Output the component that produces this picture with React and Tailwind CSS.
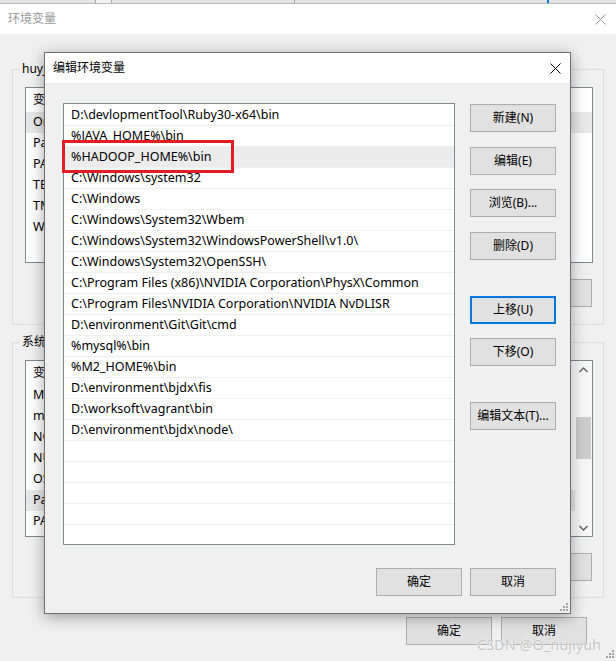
import React from "react";

const FONT = "font-[family-name:'Noto_Sans','Noto_Sans_CJK_SC',sans-serif]";

function CloseX({ color = "#000000" }) {
  return (
    <svg width="11" height="11" viewBox="0 0 11 11">
      <path d="M0.5 0.5 L10.5 10.5 M10.5 0.5 L0.5 10.5" stroke={color} strokeWidth="1" fill="none" />
    </svg>
  );
}

function Grip() {
  return (
    <svg width="8" height="8" viewBox="0 0 8 8">
      <g fill="#a6a6a6">
        <rect x="6" y="0" width="2" height="2" />
        <rect x="3" y="3" width="2" height="2" />
        <rect x="6" y="3" width="2" height="2" />
        <rect x="0" y="6" width="2" height="2" />
        <rect x="3" y="6" width="2" height="2" />
        <rect x="6" y="6" width="2" height="2" />
      </g>
    </svg>
  );
}

function Btn({ children, focused = false }) {
  return (
    <div
      className={
        focused
          ? "flex h-[28px] w-[86px] shrink-0 items-center justify-center border-2 border-[#0078d7] bg-[#e1e1e1] text-[12px] text-black"
          : "flex h-[28px] w-[86px] shrink-0 items-center justify-center border border-[#adadad] bg-[#e1e1e1] text-[12px] text-black"
      }
    >
      {children}
    </div>
  );
}

function BackList({ rows, highlight, height, scroll = false }) {
  return (
    <div className="flex border border-[#828790] bg-white" style={{ height }}>
      <div className="flex min-w-0 flex-1 flex-col overflow-hidden">
        <div className="flex h-[24px] shrink-0 items-center text-[12px]">
          <span className="pl-[7px]">变量</span>
        </div>
        {rows.map((r) => (
          <div
            key={r}
            className={
              r === highlight
                ? "flex h-[21px] shrink-0 items-center bg-[#e8e8e8] text-[12.5px]"
                : "flex h-[21px] shrink-0 items-center text-[12.5px]"
            }
          >
            <span className="whitespace-nowrap pl-[7px]">{r}</span>
          </div>
        ))}
      </div>
      {scroll && (
        <div className="flex w-[17px] shrink-0 flex-col items-center bg-[#f7f7f7]">
          <div className="flex h-[17px] w-full items-center justify-center">
            <svg width="9" height="6" viewBox="0 0 9 6">
              <path d="M0.5 5 L4.5 1 L8.5 5" stroke="#606060" strokeWidth="1.4" fill="none" />
            </svg>
          </div>
          <div className="mt-[39px] h-[42px] w-[15px] bg-[#cdcdcd]" />
          <div className="flex-1" />
          <div className="flex h-[17px] w-full items-center justify-center">
            <svg width="9" height="6" viewBox="0 0 9 6">
              <path d="M0.5 1 L4.5 5 L8.5 1" stroke="#606060" strokeWidth="1.4" fill="none" />
            </svg>
          </div>
        </div>
      )}
    </div>
  );
}

function Group({ label, children, className = "" }) {
  return (
    <div className={"flex flex-col border border-[#dcdcdc] pl-[12px] pr-[10px] " + className}>
      <div className="-ml-[5px] -mt-[9px] h-[16px] w-fit bg-[#f0f0f0] px-[2px] text-[12px] leading-[16px]">
        {label}
      </div>
      {children}
    </div>
  );
}

const paths = [
  "D:\\devlopmentTool\\Ruby30-x64\\bin",
  "%JAVA_HOME%\\bin",
  "%HADOOP_HOME%\\bin",
  "C:\\Windows\\system32",
  "C:\\Windows",
  "C:\\Windows\\System32\\Wbem",
  "C:\\Windows\\System32\\WindowsPowerShell\\v1.0\\",
  "C:\\Windows\\System32\\OpenSSH\\",
  "C:\\Program Files (x86)\\NVIDIA Corporation\\PhysX\\Common",
  "C:\\Program Files\\NVIDIA Corporation\\NVIDIA NvDLISR",
  "D:\\environment\\Git\\Git\\cmd",
  "%mysql%\\bin",
  "%M2_HOME%\\bin",
  "D:\\environment\\bjdx\\fis",
  "D:\\worksoft\\vagrant\\bin",
  "D:\\environment\\bjdx\\node\\",
];

export default function App() {
  const rows = [...paths];
  while (rows.length < 21) rows.push("");
  return (
    <div className={"relative h-[661px] w-[616px] overflow-hidden bg-[#f0f0f0] text-black " + FONT}>
      {/* strip of window behind */}
      <div className="flex h-[4px] border-b border-[#b9b9b9] bg-[#e4e4e4]">
        <div className="w-[96px] border-r border-[#a9a9a9]" />
        <div className="w-[16px] border-r border-[#a9a9a9] bg-[#f2f2f2]" />
        <div className="w-[183px] border-r border-[#a9a9a9]" />
        <div className="w-[252px]" />
        <div className="w-[2px] bg-[#0078d7]" />
        <div className="flex-1" />
      </div>
      {/* back window title */}
      <div className="flex h-[30px] items-center justify-between bg-white pl-[8px] pr-[10px]">
        <span className="text-[12px] text-[#9a9a9a]">环境变量</span>
        <CloseX color="#9a9a9a" />
      </div>
      {/* back window body */}
      <div className="flex flex-col px-[12px] pt-[35px]">
        <Group label="huyjiuyu 的用户变量(U)" className="pb-[17px]">
          <div className="mt-[10px]">
            <BackList
              height={176}
              highlight="OneDrive"
              rows={["OneDrive", "Path", "PATH", "TEMP", "TMP", "WebStorm"]}
            />
          </div>
          <div className="mr-[1px] mt-[16px] flex justify-end gap-[9px]">
            <Btn />
            <Btn />
            <Btn />
          </div>
        </Group>
        <Group label="系统变量(S)" className="mt-[17px] pb-[16px]">
          <div className="mt-[10px]">
            <BackList
              height={177}
              scroll
              highlight="Path"
              rows={["M2_HOME", "mysql", "NODE_PATH", "NUMBER_OF_PROCESSORS", "OS", "Path", "PATHEXT"]}
            />
          </div>
          <div className="mr-[1px] mt-[16px] flex justify-end gap-[9px]">
            <Btn />
            <Btn />
            <Btn />
          </div>
        </Group>
        <div className="mt-[19px] flex justify-end gap-[9px] pr-[17px]">
          <Btn>确定</Btn>
          <Btn>取消</Btn>
        </div>
      </div>

      {/* back window grip */}
      <div className="absolute bottom-[3px] right-[2px]">
        <Grip />
      </div>

      {/* front dialog */}
      <div className="absolute left-[44px] top-[52px] flex h-[562px] w-[527px] flex-col border border-[#707070] bg-[#f0f0f0] shadow-[0_3px_14px_rgba(0,0,0,0.35)]">
        <div className="flex h-[30px] shrink-0 items-center justify-between bg-white pl-[8px] pr-[9px]">
          <span className="text-[12px]">编辑环境变量</span>
          <CloseX />
        </div>
        <div className="flex flex-1 flex-col pl-[18px] pr-[14px] pt-[20px]">
          <div className="flex gap-[15px]">
            <div className="h-[442px] w-[392px] shrink-0 overflow-hidden border border-[#828790] bg-white pt-[1px]">
              {rows.map((p, i) => (
                <div
                  key={i}
                  className={
                    i === 2
                      ? "flex h-[21px] items-center border-b border-[#f0f0f0] bg-[#ececec] pl-[7px] pt-[1px] text-[12.5px]"
                      : "flex h-[21px] items-center border-b border-[#f0f0f0] pl-[7px] pt-[1px] text-[12.5px]"
                  }
                >
                  {p}
                </div>
              ))}
            </div>
            <div className="flex flex-col pt-[1px]">
              <Btn>新建(N)</Btn>
              <div className="mt-[15px]"><Btn>编辑(E)</Btn></div>
              <div className="mt-[14px]"><Btn>浏览(B)...</Btn></div>
              <div className="mt-[15px]"><Btn>删除(D)</Btn></div>
              <div className="mt-[36px]"><Btn focused>上移(U)</Btn></div>
              <div className="mt-[14px]"><Btn>下移(O)</Btn></div>
              <div className="mt-[36px]"><Btn>编辑文本(T)...</Btn></div>
            </div>
          </div>
          <div className="mt-[23px] flex justify-end gap-[8px]">
            <Btn>确定</Btn>
            <Btn>取消</Btn>
          </div>
        </div>
        <div className="absolute bottom-[2px] right-[2px]">
          <Grip />
        </div>
      </div>

      {/* red annotation box */}
      <div className="absolute left-[62px] top-[140px] h-[33px] w-[172px] border-[3px] border-[#e31b23]" />

      {/* watermark */}
      <div className="absolute right-[15px] top-[634px] text-[14.5px] leading-[20px] text-[#c4c4c4] [text-shadow:0_0_2px_#ffffff,0_0_1px_#ffffff]">
        CSDN @O_nujiyuh
      </div>
    </div>
  );
}
